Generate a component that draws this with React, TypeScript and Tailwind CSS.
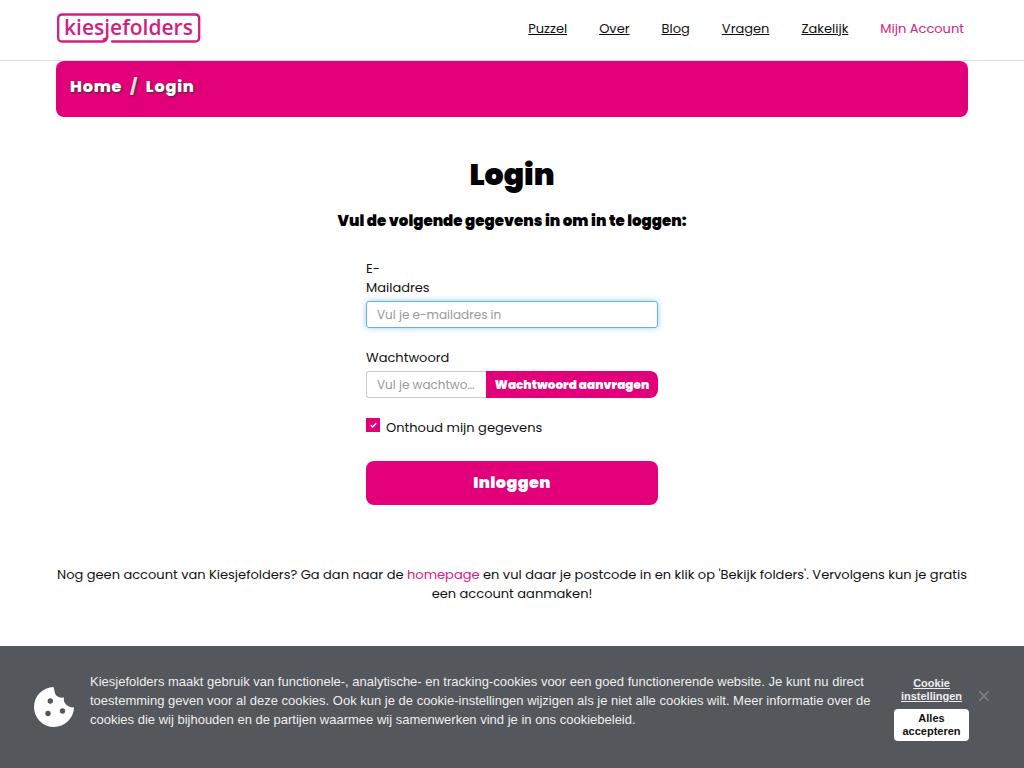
import { Check, X } from "lucide-react";
import { useState } from "react";

const navItems = ["Puzzel", "Over", "Blog", "Vragen", "Zakelijk"];

export default function App() {
  const [showCookies, setShowCookies] = useState(true);

  return (
    <div className="flex min-h-screen flex-col bg-white font-['Poppins','Inter',sans-serif] text-[13px] leading-[19px] text-[#111]">
      <SiteHeader />
      <main className="px-14">
        <Breadcrumb />
        <h1 className="mt-10 text-center text-3xl leading-9 font-black text-black">
          Login
        </h1>
        <h2 className="mt-[18px] text-center text-[15px] leading-5 font-black text-black">
          Vul de volgende gegevens in om in te loggen:
        </h2>
        <LoginForm />
        <p className="mt-15 text-center">
          Nog geen account van Kiesjefolders? Ga dan naar de{" "}
          <a className="text-[#d6207f]" href="#home">
            homepage
          </a>{" "}
          en vul daar je postcode in en klik op 'Bekijk folders'. Vervolgens kun
          je gratis een account aanmaken!
        </p>
      </main>
      {showCookies ? <CookieBar onClose={() => setShowCookies(false)} /> : null}
    </div>
  );
}

function SiteHeader() {
  return (
    <header className="flex h-[61px] items-start justify-between border-b border-[#e0e0e0] px-14 pt-3">
      <a aria-label="kiesjefolders" href="#home">
        <Logo />
      </a>
      <nav className="flex gap-8 pt-[7px] pr-1">
        {navItems.map((item) => (
          <a
            className="underline"
            href={`#${item.toLowerCase()}`}
            key={item}
          >
            {item}
          </a>
        ))}
        <a className="text-[#d6207f]" href="#account">
          Mijn Account
        </a>
      </nav>
    </header>
  );
}

function Logo() {
  return (
    <svg className="h-8 w-[145px]" viewBox="0 0 145 32">
      <path
        d="M50.500 27Q49.500 29.500 46 29.500H6q-3.800 0-3.800-4V6.500q0-4 4-4h133q4 0 4 4v19q0 4-4 4H56"
        fill="none"
        stroke="#cf1f80"
        strokeLinecap="round"
        strokeWidth="2.300"
      />
      <text
        className="font-['Open_Sans',sans-serif] text-[21px] font-semibold"
        fill="#cf1f80"
        x="8"
        y="23"
      >
        kiesjefolders
      </text>
    </svg>
  );
}

function Breadcrumb() {
  return (
    <nav
      aria-label="Breadcrumb"
      className="flex h-14 gap-2 rounded-lg bg-[#e2007a] px-[14px] pt-4 text-base leading-5 font-extrabold tracking-wider text-white text-shadow-[1px_1px_2px_#333]"
    >
      <a href="#home">Home</a>
      <span className="text-[#ddd]">/</span>
      <span>Login</span>
    </nav>
  );
}

function LoginForm() {
  return (
    <form
      className="mx-auto mt-7 w-[292px]"
      onSubmit={(event) => event.preventDefault()}
    >
      <label className="block w-16" htmlFor="email">
        E-
        <br />
        Mailadres
      </label>
      <input
        className="mt-1 block h-[27px] w-full rounded-[3px] border border-[#66afe9] px-[10px] text-xs shadow-[0_0_6px_#66afe999] outline-none placeholder:text-[#999]"
        id="email"
        placeholder="Vul je e-mailadres in"
        type="email"
      />

      <label className="mt-5 block" htmlFor="password">
        Wachtwoord
      </label>
      <div className="mt-1 flex h-[27px]">
        <input
          className="min-w-0 flex-1 rounded-l-[3px] border border-r-0 border-[#ccc] px-[10px] text-xs text-ellipsis outline-none placeholder:text-[#999]"
          id="password"
          placeholder="Vul je wachtwoord in"
          type="password"
        />
        <button
          className="w-[172px] shrink-0 rounded-r-lg bg-[#e2007a] text-xs font-black whitespace-nowrap text-white"
          type="button"
        >
          Wachtwoord aanvragen
        </button>
      </div>

      <label className="mt-5 flex items-start gap-[6px]">
        <span className="grid size-[14px]">
          <input
            className="col-start-1 row-start-1 size-[14px] appearance-none bg-[#e2007a]"
            defaultChecked
            type="checkbox"
          />
          <Check
            aria-hidden="true"
            className="pointer-events-none col-start-1 row-start-1 size-[7px] place-self-center text-white"
            strokeWidth={5}
          />
        </span>
        <span>Onthoud mijn gegevens</span>
      </label>

      <button
        className="mt-6 h-11 w-full rounded-lg bg-[#e2007a] text-base font-black tracking-wide text-white"
        type="submit"
      >
        Inloggen
      </button>
    </form>
  );
}

function CookieBar({ onClose }: { onClose: () => void }) {
  return (
    <aside className="mt-auto flex min-h-[122px] items-center bg-[#54575c] pr-8 pl-[34px] font-['Liberation_Sans',sans-serif] text-white">
      <CookieIcon />
      <p className="ml-4 min-w-0 flex-1 pb-[14px] leading-[19px] text-[#eee]">
        Kiesjefolders maakt gebruik van functionele-, analytische- en
        tracking-cookies voor een goed functionerende website. Je kunt nu direct
        toestemming geven voor al deze cookies. Ook kun je de
        cookie-instellingen wijzigen als je niet alle cookies wilt. Meer
        informatie over de cookies die wij bijhouden en de partijen waarmee wij
        samenwerken vind je in ons cookiebeleid.
      </p>
      <div className="ml-4 flex w-[75px] flex-col items-center gap-[6px] pt-1 text-center font-bold">
        <button
          className="text-[11px] leading-[13px] text-[#eee] underline"
          type="button"
        >
          Cookie instellingen
        </button>
        <button
          className="h-8 w-full rounded-[4px] bg-white px-2 text-[11px] leading-[13px] text-[#111]"
          onClick={onClose}
          type="button"
        >
          Alles accepteren
        </button>
      </div>
      <button
        aria-label="Sluiten"
        className="ml-[7px] pb-[22px] text-[#85888c]"
        onClick={onClose}
        type="button"
      >
        <X aria-hidden="true" className="size-4" strokeWidth={2} />
      </button>
    </aside>
  );
}

function CookieIcon() {
  return (
    <svg aria-hidden="true" className="size-10 shrink-0" viewBox="0 0 40 40">
      <path
        d="M19.500 0A20 20 0 1 0 40 20.500C36 20.500 32.500 19 30.500 15.500Q29.500 13.500 30 10.500C26 11 23 10 21.500 7.500C20.500 5.500 20.500 3 19.500 0Z"
        fill="#fff"
      />
      <g fill="#54575c">
        <circle cx="16.300" cy="14" r="2.700" />
        <circle cx="14" cy="26.500" r="2.700" />
        <circle cx="28.500" cy="24" r="2.700" />
      </g>
    </svg>
  );
}
